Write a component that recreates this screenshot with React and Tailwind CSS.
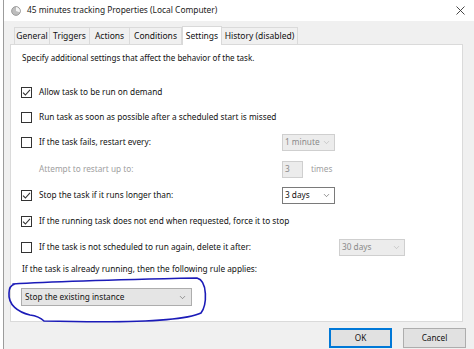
import { ChevronDown } from 'lucide-react';

const ui = "font-['Noto_Sans',sans-serif]";

function Box({ checked }) {
  return (
    <span className="w-[11px] h-[11px] border border-[#333] bg-white flex items-center justify-center shrink-0">
      {checked && (
        <svg width="9" height="9" viewBox="0 0 9 9">
          <path d="M1 4.6 L3.4 7 L8 1.8" fill="none" stroke="#333" strokeWidth="1.1" />
        </svg>
      )}
    </span>
  );
}

function Drop({ value, width, disabled }) {
  return (
    <div
      className={`h-[17px] flex items-center justify-between pl-[2px] pr-[3px] border ${
        disabled ? 'bg-[#ececec] border-[#cfcfcf] text-[#8a8a8a]' : 'bg-white border-[#7a7a7a] text-[#111]'
      } ${width}`}
    >
      <span>{value}</span>
      <ChevronDown size={9} strokeWidth={1.5} className={disabled ? 'text-[#b0b0b0]' : 'text-[#444]'} />
    </div>
  );
}

function Row({ checked, label, h = 'h-[25px]', children }) {
  return (
    <div className={`flex items-center ${h}`}>
      <div className="flex items-center gap-[7px] w-[261px] shrink-0 whitespace-nowrap">
        <Box checked={checked} />
        <span>{label}</span>
      </div>
      {children}
    </div>
  );
}

const tabs = ['General', 'Triggers', 'Actions', 'Conditions', 'Settings', 'History (disabled)'];
const tabW = ['w-[36px]', 'w-[40px]', 'w-[40px]', 'w-[52px]', 'w-[40px]', 'w-[76px]'];

export default function App() {
  return (
    <div className={`w-[474px] h-[349px] overflow-hidden bg-white pl-[3px] text-[8.25px] text-[#111] ${ui}`}>
      <div className="h-full border-l border-[#9c9c9c] flex flex-col bg-[#f0f0f0]">
        {/* title bar */}
        <div className="h-[21px] bg-white flex items-center pl-[7px] pr-[6px]">
          <svg width="10" height="10" viewBox="0 0 10 10" className="mr-[6px]">
            <circle cx="5" cy="5" r="4.4" fill="#bdbdbd" stroke="#8d8d8d" strokeWidth="0.8" />
            <path d="M5 5 L5 1 A4 4 0 0 1 8.7 6.2 Z" fill="#f4f4f4" />
          </svg>
          <span className="text-[8.4px] text-[#222]">45 minutes tracking Properties (Local Computer)</span>
          <svg width="9" height="9" viewBox="0 0 9 9" className="ml-auto mr-[3px]">
            <path d="M0.5 0.5 L8.5 8.5 M8.5 0.5 L0.5 8.5" stroke="#333" strokeWidth="0.9" />
          </svg>
        </div>

        {/* tabs */}
        <div className="flex items-end pl-[10px] h-[23px] text-[8.5px]">
          {tabs.map((t, i) =>
            i === 4 ? (
              <div
                key={t}
                className={`${tabW[i]} h-[19px] bg-white border border-b-0 border-[#d9d9d9] flex items-center justify-center -mb-px z-10 relative`}
              >
                {t}
              </div>
            ) : (
              <div
                key={t}
                className={`${tabW[i]} h-[17px] bg-[#f0f0f0] border border-b-0 border-[#dadada] ${
                  i > 0 ? 'border-l-0' : ''
                } flex items-center justify-center`}
              >
                {t}
              </div>
            )
          )}
        </div>

        {/* settings panel */}
        <div className="ml-[6px] w-[453px] bg-white border border-[#dadada] pt-[5px] pl-[10px] pb-[15px] relative">
          <div className="h-[16px] flex items-center pl-[1px] text-[8px]">
            Specify additional settings that affect the behavior of the task.
          </div>
          <div className="mt-[14px]">
            <Row checked label="Allow task to be run on demand" />
            <Row label="Run task as soon as possible after a scheduled start is missed" />
            <Row label="If the task fails, restart every:">
              <Drop value="1 minute" width="w-[53px]" disabled />
            </Row>
            <div className="flex items-center h-[28px]">
              <span className="w-[261px] shrink-0 pl-[18px] text-[#a0a0a0]">Attempt to restart up to:</span>
              <div className="w-[21px] h-[17px] border border-[#cfcfcf] bg-[#ececec] text-[#8a8a8a] pl-[2px] flex items-center">
                3
              </div>
              <span className="ml-[8px] text-[#a0a0a0]">times</span>
            </div>
            <Row checked label="Stop the task if it runs longer than:">
              <Drop value="3 days" width="w-[53px]" />
            </Row>
            <Row checked h="h-[27px]" label="If the running task does not end when requested, force it to stop" />
            <Row label="If the task is not scheduled to run again, delete it after:">
              <div className="ml-[57px]">
                <Drop value="30 days" width="w-[66px]" disabled />
              </div>
            </Row>
          </div>
          <div className="h-[16px] flex items-center pl-[1px] mt-[1px]">
            If the task is already running, then the following rule applies:
          </div>
          <div className="mt-[11px] w-[171px] h-[18px] bg-[#e5e5e5] border border-[#adadad] flex items-center justify-between pl-[3px] pr-[4px]">
            <span>Stop the existing instance</span>
            <ChevronDown size={9} strokeWidth={1.5} className="text-[#555]" />
          </div>

          {/* hand-drawn annotation, drawn in page coordinates */}
          <svg
            className="absolute left-[-11px] top-[231px] pointer-events-none"
            width="220"
            height="50"
            viewBox="0 276 220 50"
          >
            <path
              d="M13 284 C60 281 150 279 197 278 C208 281 207 305 201 313 C182 322 120 323 44 321 C41 318 38 316 30 315 C18 312 8 305 9 293 C9 288 11 285 15 284"
              fill="none"
              stroke="#1b1bb8"
              strokeWidth="1.6"
              strokeLinecap="round"
            />
          </svg>
        </div>

        {/* buttons */}
        <div className="flex justify-end gap-[11px] pr-[8px] pt-[6px]">
          <button className="w-[63px] h-[20px] bg-[#e1e1e1] border-2 border-[#0078d7] flex items-center justify-center">
            OK
          </button>
          <button className="w-[63px] h-[20px] bg-[#e1e1e1] border border-[#adadad] flex items-center justify-center">
            Cancel
          </button>
        </div>
      </div>
    </div>
  );
}
